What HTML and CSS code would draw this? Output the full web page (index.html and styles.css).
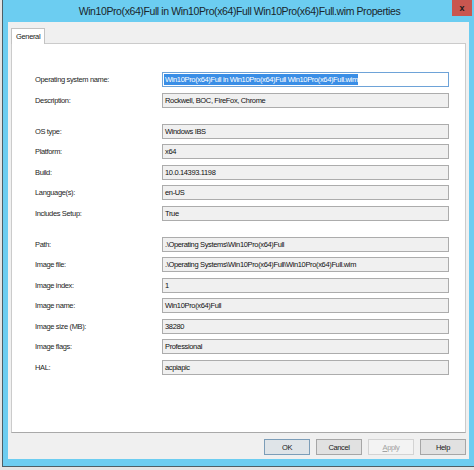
FILE: index.html
```html
<!DOCTYPE html>
<html>
<head>
<meta charset="utf-8">
<link rel="stylesheet" href="styles.css">
</head>
<body>
<div class="window">
  <div class="titlebar">
    <span class="title">Win10Pro(x64)Full in Win10Pro(x64)Full Win10Pro(x64)Full.wim Properties</span>
    <span class="close">x</span>
  </div>
  <div class="content">
    <div class="tabs"><div class="tab">General</div></div>
    <div class="panel">
      <div class="group">
        <div class="row"><span class="label">Operating system name:</span><span class="field focus"><span class="sel">Win10Pro(x64)Full in Win10Pro(x64)Full Win10Pro(x64)Full.wim</span></span></div>
        <div class="row"><span class="label">Description:</span><span class="field">Rockwell, BOC, FireFox, Chrome</span></div>
      </div>
      <div class="group">
        <div class="row"><span class="label">OS type:</span><span class="field">Windows IBS</span></div>
        <div class="row"><span class="label">Platform:</span><span class="field">x64</span></div>
        <div class="row"><span class="label">Build:</span><span class="field">10.0.14393.1198</span></div>
        <div class="row"><span class="label">Language(s):</span><span class="field">en-US</span></div>
        <div class="row"><span class="label">Includes Setup:</span><span class="field">True</span></div>
      </div>
      <div class="group">
        <div class="row"><span class="label">Path:</span><span class="field">.\Operating Systems\Win10Pro(x64)Full</span></div>
        <div class="row"><span class="label">Image file:</span><span class="field">.\Operating Systems\Win10Pro(x64)Full\Win10Pro(x64)Full.wim</span></div>
        <div class="row"><span class="label">Image index:</span><span class="field">1</span></div>
        <div class="row"><span class="label">Image name:</span><span class="field">Win10Pro(x64)Full</span></div>
        <div class="row"><span class="label">Image size (MB):</span><span class="field">38280</span></div>
        <div class="row"><span class="label">Image flags:</span><span class="field">Professional</span></div>
        <div class="row"><span class="label">HAL:</span><span class="field">acpiapic</span></div>
      </div>
    </div>
    <div class="buttons">
      <span class="btn default">OK</span>
      <span class="btn">Cancel</span>
      <span class="btn disabled"><u>A</u>pply</span>
      <span class="btn">Help</span>
    </div>
  </div>
</div>
</body>
</html>
```
FILE: styles.css
```css
html, body {
  margin: 0;
  padding: 0;
}
body {
  width: 474px;
  height: 470px;
  background: #e4e4e4;
  font-family: "Liberation Sans", Arial, sans-serif;
  color: #1a1a1a;
  overflow: hidden;
}
.window {
  margin-left: 2px;
  width: 471px;
  height: 466px;
  background: #6ccdf1;
  border-left: 1px solid #4d5f66;
  border-bottom: 1px solid #4d5f66;
  position: relative;
}
.titlebar {
  height: 22px;
  display: flex;
  align-items: center;
  justify-content: center;
}
.title {
  font-size: 10.5px;
  letter-spacing: -0.4px;
  color: #1a262c;
  margin-left: 2px;
}
.close {
  position: absolute;
  right: 2px;
  top: 0;
  width: 20px;
  height: 16px;
  background: #c9564f;
  color: #1a1a1a;
  font-size: 9px;
  font-weight: bold;
  display: flex;
  align-items: center;
  justify-content: center;
}
.content {
  margin: 0 5px 0 5px;
  height: 437px;
  background: #f0f0f0;
  padding: 6px 3px 0 3px;
  box-sizing: border-box;
  display: flex;
  flex-direction: column;
}
.tabs {
  display: flex;
  height: 15px;
}
.tab {
  width: 34px;
  height: 16px;
  box-sizing: border-box;
  background: #fff;
  border: 1px solid #c3c3c3;
  border-bottom: none;
  font-size: 7.5px;
  letter-spacing: -0.35px;
  padding: 3px 0 0 4px;
  position: relative;
  z-index: 1;
}
.panel {
  height: 390px;
  box-sizing: border-box;
  background: #fff;
  border: 1px solid #cbcbcb;
  border-bottom-color: #a9a9a9;
  padding: 28px 16px 0 23px;
  display: flex;
  flex-direction: column;
  gap: 16px;
}
.group {
  display: flex;
  flex-direction: column;
  gap: 5.5px;
}
.row {
  display: flex;
  align-items: center;
  height: 15px;
}
.label {
  width: 127px;
  font-size: 7.5px;
  letter-spacing: -0.35px;
  color: #1e1e1e;
}
.field {
  width: 287px;
  height: 15px;
  box-sizing: border-box;
  background: #f0f0f0;
  border: 1px solid #acacac;
  font-size: 7.5px;
  letter-spacing: -0.35px;
  color: #111;
  display: flex;
  align-items: center;
  padding-left: 2px;
  white-space: nowrap;
  overflow: hidden;
}
.field.focus {
  background: #fff;
  border-color: #6ea3d8;
  padding-left: 1px;
}
.sel {
  background: #3a8ee6;
  color: #fff;
  height: 11px;
  line-height: 11px;
  padding-left: 1px;
}
.buttons {
  display: flex;
  justify-content: flex-end;
  gap: 6px;
  margin-top: 6px;
  padding-right: 0;
}
.btn {
  width: 46px;
  height: 16px;
  box-sizing: border-box;
  background: #e1e1e1;
  border: 1px solid #a6a6a6;
  font-size: 7.5px;
  letter-spacing: -0.35px;
  color: #1a1a1a;
  display: flex;
  align-items: center;
  justify-content: center;
}
.btn.default {
  background: #dfe4e8;
  border-color: #7b9db8;
}
.btn.disabled {
  background: #f3f3f3;
  border-color: #d3d3d3;
  color: #a2a2a2;
}
```
